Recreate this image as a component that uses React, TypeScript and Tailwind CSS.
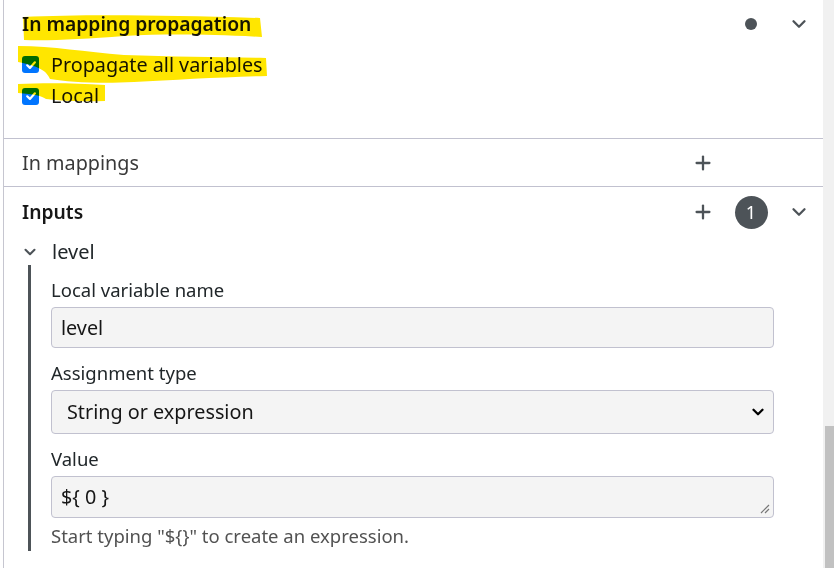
import { ChevronDown, Plus } from 'lucide-react';

const font = { fontFamily: '"Noto Sans", "Liberation Sans", sans-serif' };

function Check() {
  return (
    <span className="w-[17px] h-[17px] rounded-[3px] bg-[#0075ff] flex items-center justify-center shrink-0">
      <svg viewBox="0 0 12 12" className="w-[12px] h-[12px]">
        <path d="M2.2 6.3 L4.9 8.9 L9.9 3.3" fill="none" stroke="white" strokeWidth="2.2" strokeLinecap="round" strokeLinejoin="round" />
      </svg>
    </span>
  );
}

// Hand-drawn highlighter strokes laid over the top section
function Highlights() {
  return (
    <svg className="absolute left-0 top-0 w-[280px] h-[115px] pointer-events-none mix-blend-multiply" viewBox="0 0 280 115">
      <path d="M19 17 C80 14 160 15 256 18 L258 37 C200 34 160 34 120 36 C80 39 45 41 20 40 Z" fill="#ffe600" />
      <path d="M14 46 C50 46 80 52 120 55 C170 57 220 57 262 58 L263 76 C220 77 170 80 130 82 C95 84 65 82 46 79 C42 70 34 66 14 62 Z" fill="#ffe600" />
      <path d="M14 84 C40 83 70 83 101 85 L101 101 C70 102 50 100 42 99 C38 96 30 94 14 93 Z" fill="#ffe600" />
    </svg>
  );
}

function Slot({ children }: { children?: React.ReactNode }) {
  return <div className="w-12 flex items-center justify-center">{children}</div>;
}

function Field({ label, children }: { label: string; children: React.ReactNode }) {
  return (
    <div>
      <div className="h-[34px] flex items-center text-[18.5px] text-[#21272a]">{label}</div>
      {children}
    </div>
  );
}

export default function App() {
  return (
    <div className="w-[834px] h-[568px] flex bg-white overflow-hidden" style={font}>
      <div className="w-[3px]" />
      <div className="flex-1 border-l border-[#c6c6d0] relative">
        {/* In mapping propagation */}
        <div className="h-[139px] border-b border-[#c1c1cf] pl-[18px]">
          <div className="h-[48px] flex items-center justify-between">
            <span className="text-[19.3px] font-semibold text-[#161616]">In mapping propagation</span>
            <div className="flex">
              <Slot>
                <span className="w-[12px] h-[12px] rounded-full bg-[#4d5358]" />
              </Slot>
              <Slot>
                <ChevronDown className="w-[22px] h-[22px] text-[#4d5358]" strokeWidth={2.5} />
              </Slot>
            </div>
          </div>
          <label className="h-[33px] flex items-center gap-3 text-[19.8px] text-[#161616]">
            <Check />
            Propagate all variables
          </label>
          <label className="h-[30px] flex items-center gap-3 text-[19.8px] text-[#161616]">
            <Check />
            Local
          </label>
        </div>

        {/* In mappings */}
        <div className="h-[48px] border-b border-[#c1c1cf] pl-[18px] flex items-center justify-between">
          <span className="text-[19.8px] text-[#393939]">In mappings</span>
          <div className="flex">
            <Slot>
              <Plus className="w-[22px] h-[22px] text-[#4d5358]" strokeWidth={2.5} />
            </Slot>
            <Slot />
            <Slot />
          </div>
        </div>

        {/* Inputs */}
        <div className="pl-[18px]">
          <div className="h-[50px] flex items-center justify-between">
            <span className="text-[19.3px] font-semibold text-[#161616]">Inputs</span>
            <div className="flex">
              <Slot>
                <Plus className="w-[22px] h-[22px] text-[#4d5358]" strokeWidth={2.5} />
              </Slot>
              <Slot>
                <span className="w-[33px] h-[33px] rounded-full bg-[#4d5358] text-white text-[18px] flex items-center justify-center">1</span>
              </Slot>
              <Slot>
                <ChevronDown className="w-[22px] h-[22px] text-[#4d5358]" strokeWidth={2.5} />
              </Slot>
            </div>
          </div>

          <div className="h-[30px] flex items-center">
            <ChevronDown className="w-[18px] h-[18px] text-[#4d5358] ml-[-1px]" strokeWidth={2.8} />
            <span className="ml-[13px] text-[20px] text-[#21272a]">level</span>
          </div>

          <div className="flex ml-[6px] mt-[-2px]">
            <div className="w-[3px] bg-[#4d5358] h-[286px]" />
            <div className="ml-[20px] w-[723px] pt-[8px] flex flex-col gap-[8px]">
              <Field label="Local variable name">
                <div className="h-[41px] rounded-[4px] border border-[#c1c1cf] bg-[#f4f4f4] flex items-center px-[9px] text-[19.8px] text-[#161616]">
                  level
                </div>
              </Field>
              <Field label="Assignment type">
                <div className="h-[44px] rounded-[4px] border border-[#c1c1cf] bg-[#f4f4f4] flex items-center justify-between pl-[15px] pr-[6px] text-[19.8px] text-[#161616]">
                  String or expression
                  <ChevronDown className="w-[18px] h-[18px] text-black" strokeWidth={3} />
                </div>
              </Field>
              <Field label="Value">
                <div className="h-[42px] rounded-[4px] border border-[#c1c1cf] bg-[#f4f4f4] flex items-center px-[9px] text-[19.8px] text-[#161616] relative">
                  {'${ 0 }'}
                  <svg className="absolute right-[3px] bottom-[3px] w-[10px] h-[10px]" viewBox="0 0 10 10">
                    <path d="M9 1 L1 9 M9 5 L5 9" stroke="#777" strokeWidth="1.2" />
                  </svg>
                </div>
                <div className="mt-[4px] text-[18.5px] text-[#525252]">Start typing "{'${}'}" to create an expression.</div>
              </Field>
            </div>
          </div>
        </div>

        <Highlights />
      </div>

      {/* scrollbar */}
      <div className="w-[11px] bg-[#f1f1f1] flex flex-col">
        <div className="h-[426px]" />
        <div className="flex-1 ml-[2px] bg-[#c1c1c1]" />
      </div>
    </div>
  );
}
